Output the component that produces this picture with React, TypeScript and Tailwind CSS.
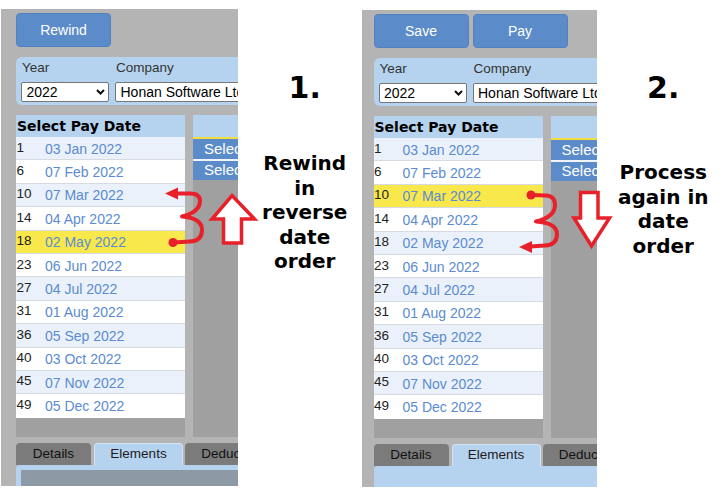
import React from 'react';

const payDates: [number, string][] = [
  [1, '03 Jan 2022'],
  [6, '07 Feb 2022'],
  [10, '07 Mar 2022'],
  [14, '04 Apr 2022'],
  [18, '02 May 2022'],
  [23, '06 Jun 2022'],
  [27, '04 Jul 2022'],
  [31, '01 Aug 2022'],
  [36, '05 Sep 2022'],
  [40, '03 Oct 2022'],
  [45, '07 Nov 2022'],
  [49, '05 Dec 2022'],
];

const arial = { fontFamily: '"Liberation Sans", Arial, sans-serif' };
const verdana = { fontFamily: '"DejaVu Sans", Verdana, sans-serif' };

const Chevron = () => (
  <svg width="9" height="6" viewBox="0 0 9 6" className="shrink-0">
    <polyline points="1,1 4.5,4.5 8,1" fill="none" stroke="#111" strokeWidth="2" />
  </svg>
);

type PanelProps = {
  buttons: string[];
  highlight: number;
  shaded: boolean;
  className: string;
};

const Panel = ({ buttons, highlight, shaded, className }: PanelProps) => (
  <div className={`h-[477px] bg-[#b4b4b4] overflow-hidden shrink-0 ${className}`} style={arial}>
    <div className="w-[400px] flex flex-col">
      {/* Action buttons */}
      <div className="mt-[4px] flex gap-[4px]">
        {buttons.map((b) => (
          <div
            key={b}
            className="h-[34px] w-[95px] rounded-[4px] bg-[#5b8bc9] border border-[#5082c2] text-white text-[14px] flex items-center justify-center"
          >
            {b}
          </div>
        ))}
      </div>

      {/* Year / Company */}
      <div className="mt-[10px] h-[48px] rounded-[6px] bg-[#b5d3ef] pl-[5px] pt-[3px] flex gap-[6px]">
        <div className="w-[88px] flex flex-col">
          <span className="pl-[1px] text-[13.5px] leading-[16px] text-[#333]">Year</span>
          <div className="mt-[6px] h-[20px] bg-white border border-[#767676] rounded-[2px] pl-[4.5px] pr-[3px] flex items-center justify-between text-[14px] text-black">
            <span>2022</span>
            <Chevron />
          </div>
        </div>
        <div className="w-[200px] flex flex-col">
          <span className="pl-[1px] text-[13.5px] leading-[16px] text-[#333]">Company</span>
          <div className="mt-[6px] h-[20px] bg-white border border-[#767676] rounded-[2px] pl-[4.5px] flex items-center text-[14px] text-black whitespace-nowrap">
            Honan Software Ltd
          </div>
        </div>
      </div>

      {/* Columns */}
      <div className="mt-[10px] h-[322px] flex gap-[8px]">
        <div className="w-[169px] bg-[#a0a0a0] flex flex-col">
          <div className="h-[22px] bg-[#b5d3ef] pl-[1px] flex items-center text-[14px] font-bold text-black" style={verdana}>
            Select Pay Date
          </div>
          {payDates.map(([n, d], i) => (
            <div
              key={n}
              className={`h-[23.4px] flex items-center ${i < payDates.length - 1 ? 'border-b border-[#d6dbe1]' : ''} ${
                i === highlight ? 'bg-[#f9e84b]' : i % 2 === 0 ? 'bg-[#eaf1fa]' : 'bg-white'
              }`}
            >
              <span className="w-[29px] pl-[0.5px] -mt-[1px] text-[13.5px] text-[#222]">{n}</span>
              <span className="pt-[2px] text-[14px] text-[#5b8bd0]">{d}</span>
            </div>
          ))}
        </div>
        <div className="w-[200px] bg-[#a0a0a0] flex flex-col">
          <div className="h-[24px] bg-[#b5d3ef] border-b-2 border-[#f3dd3f]" />
          <div className="h-[20px] bg-[#5b8bc9] text-white text-[15px] pl-[11px] flex items-center">Select</div>
          <div className="h-[2px] bg-[#f2f5f8]" />
          <div className="h-[19px] bg-[#5b8bc9] text-white text-[15px] pl-[11px] flex items-center">Select</div>
        </div>
      </div>

      {/* Tabs */}
      <div className="mt-[6px] h-[22px] flex text-[13.5px]">
        <div className="w-[75px] rounded-t-[4px] bg-[#7b7b7b] text-[#111] flex items-center justify-center">Details</div>
        <div className="ml-[3px] w-[89px] rounded-t-[4px] bg-[#b5d3ef] border border-b-0 border-[#d3e4f3] text-[#221a1c] flex items-center justify-center">
          Elements
        </div>
        <div className="ml-[2px] w-[100px] rounded-t-[4px] bg-[#7b7b7b] text-[#111] flex items-center justify-center">Deductions</div>
      </div>
      <div className="h-[40px] rounded-tl-[4px] bg-[#b5d3ef] pl-[5px] pt-[5px]">
        {shaded && <div className="h-full bg-[#8d99a4]" />}
      </div>
    </div>
  </div>
);

const Note = ({ num, lines, textTop }: { num: string; lines: string[]; textTop: string }) => (
  <div className="flex-1 pl-[10px] flex flex-col items-center text-black font-bold" style={verdana}>
    <div className="mt-[73px] text-[30px] leading-none">{num}</div>
    <div className={`${textTop} flex flex-col items-center text-[20px] leading-[24.5px]`}>
      {lines.map((l) => (
        <span key={l} className="whitespace-nowrap">{l}</span>
      ))}
    </div>
  </div>
);

const Arrows = () => (
  <svg width="720" height="495" className="absolute left-0 top-0 pointer-events-none">
    <g stroke="#e8202a" fill="none" strokeWidth="4" strokeLinecap="round" strokeLinejoin="round">
      {/* left: bottom row back up to earlier row */}
      <path d="M176 193.5 L190 193.5 Q200 193.5 200 201 Q200 212 182 216.5 Q202 218 202 230 Q202 241 190 241.5 L173 242.5" />
      {/* right: earlier row forward to later row */}
      <path d="M531 195 L546 195.5 Q555 196 555 205 Q555 217 536 221.5 Q557 223 557 234 Q557 245 545 245.5 L530 246.5" />
    </g>
    <g fill="#e8202a">
      <circle cx="173" cy="242.5" r="4.5" />
      <polygon points="165,193.5 178,187.5 178,199.5" />
      <circle cx="531" cy="195" r="4.5" />
      <polygon points="519,247 532,241 532,253" />
    </g>
    <g fill="#ffffff" stroke="#e8202a" strokeWidth="3.5" strokeLinejoin="miter">
      <polygon points="232,195.5 254.5,219 241.5,219 241.5,243 223.5,243 223.5,219 212,219" />
      <polygon points="580.5,192.5 598,192.5 598,218 609.5,218 591.5,246 574,218 580.5,218" />
    </g>
  </svg>
);

export default function App() {
  return (
    <div className="relative w-[720px] h-[495px] bg-white overflow-hidden flex">
      <div className="pl-[1px] pt-[9px] shrink-0">
        <Panel buttons={['Rewind']} highlight={4} shaded className="w-[237px] pl-[15px]" />
      </div>
      <Note num="1." lines={['Rewind', 'in', 'reverse', 'date', 'order']} textTop="mt-[48px]" />
      <div className="pt-[10px] shrink-0">
        <Panel buttons={['Save', 'Pay']} highlight={2} shaded={false} className="w-[235px] pl-[12px]" />
      </div>
      <Note num="2." lines={['Process', 'again in', 'date', 'order']} textTop="mt-[57px]" />
      <Arrows />
    </div>
  );
}
